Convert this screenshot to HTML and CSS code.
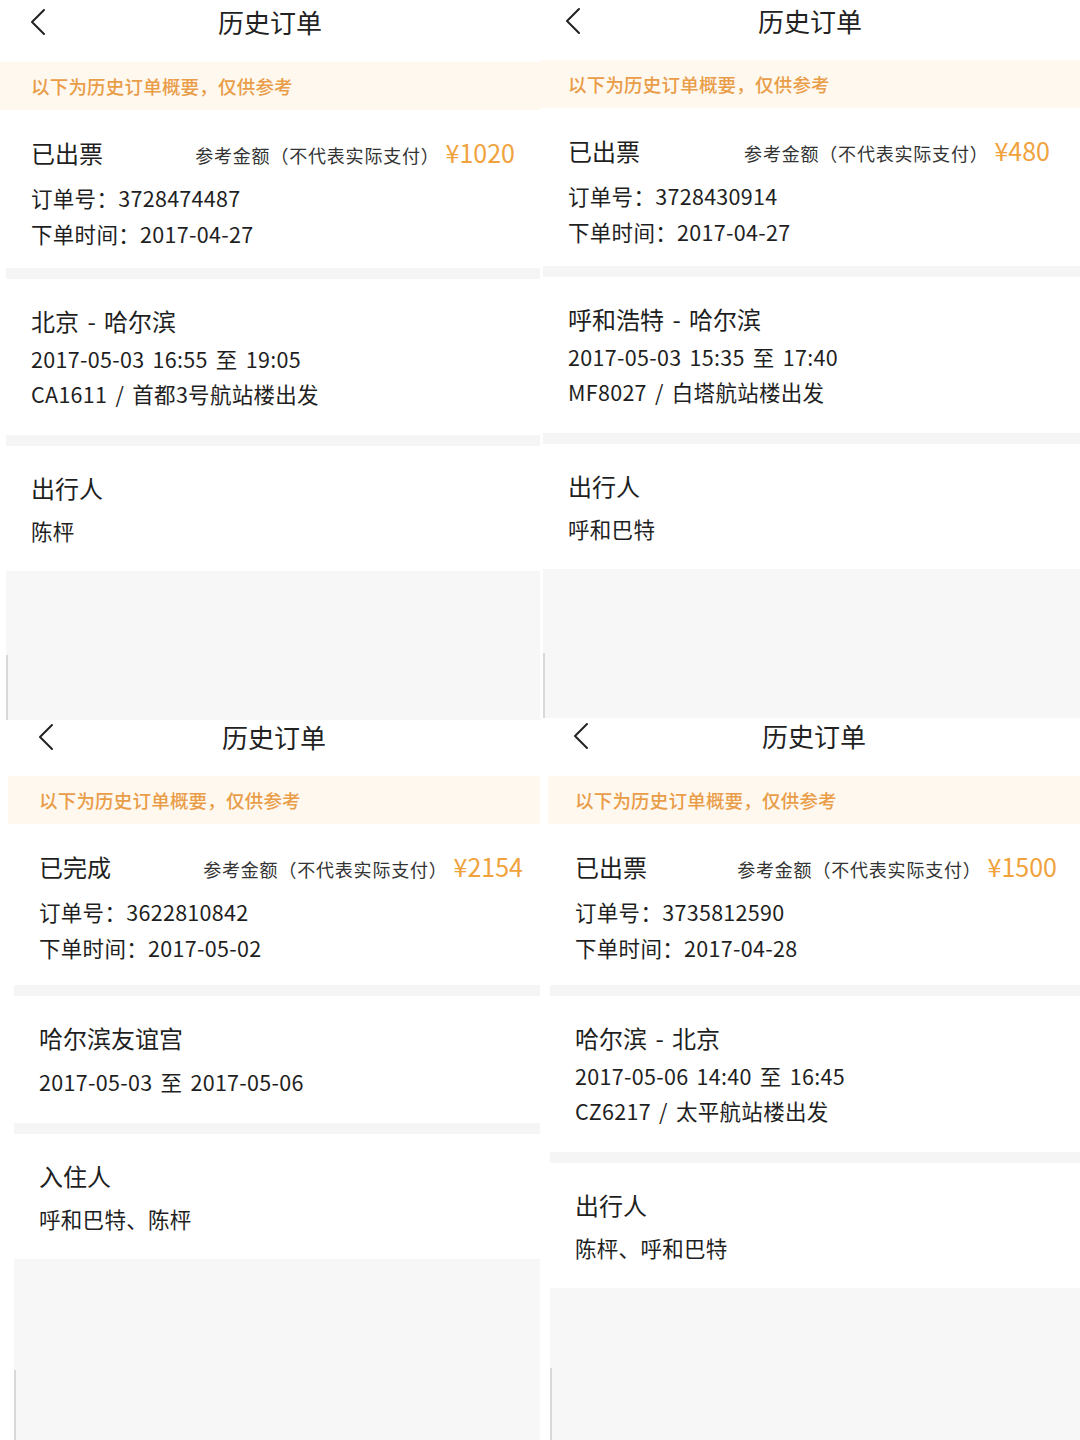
FILE: index.html
```html
<!DOCTYPE html>
<html lang="zh-CN">
<head>
    <meta charset="UTF-8">
    <meta name="viewport" content="width=device-width, initial-scale=1.0">
    <title>历史订单</title>
    <link rel="stylesheet" href="styles.css">
</head>
<body>
<main class="sheet">

    <section class="panel panel-tl">
        <header class="topbar">
            <span class="back"><svg width="18" height="28" viewBox="0 0 18 28"><path d="M15 2 L3 14 L15 26" fill="none" stroke="#222" stroke-width="2" stroke-linecap="round" stroke-linejoin="round"/></svg></span>
            <h1>历史订单</h1>
            <span></span>
        </header>
        <div class="notice">以下为历史订单概要，仅供参考</div>
        <div class="block order">
            <div class="order-head">
                <span class="status">已出票</span>
                <span class="ref">参考金额（不代表实际支付）</span>
                <span class="price">¥1020</span>
            </div>
            <p>订单号：3728474487</p>
            <p>下单时间：2017-04-27</p>
        </div>
        <div class="gap"></div>
        <div class="block trip">
            <div class="block-title">北京 - 哈尔滨</div>
            <p>2017-05-03 16:55 至 19:05</p>
            <p>CA1611 / 首都3号航站楼出发</p>
        </div>
        <div class="gap"></div>
        <div class="block people">
            <div class="block-title">出行人</div>
            <p>陈枰</p>
        </div>
        <div class="filler"><span class="edge"></span></div>
    </section>

    <section class="panel panel-tr">
        <header class="topbar">
            <span class="back"><svg width="18" height="28" viewBox="0 0 18 28"><path d="M15 2 L3 14 L15 26" fill="none" stroke="#222" stroke-width="2" stroke-linecap="round" stroke-linejoin="round"/></svg></span>
            <h1>历史订单</h1>
            <span></span>
        </header>
        <div class="notice">以下为历史订单概要，仅供参考</div>
        <div class="block order">
            <div class="order-head">
                <span class="status">已出票</span>
                <span class="ref">参考金额（不代表实际支付）</span>
                <span class="price">¥480</span>
            </div>
            <p>订单号：3728430914</p>
            <p>下单时间：2017-04-27</p>
        </div>
        <div class="gap"></div>
        <div class="block trip">
            <div class="block-title">呼和浩特 - 哈尔滨</div>
            <p>2017-05-03 15:35 至 17:40</p>
            <p>MF8027 / 白塔航站楼出发</p>
        </div>
        <div class="gap"></div>
        <div class="block people">
            <div class="block-title">出行人</div>
            <p>呼和巴特</p>
        </div>
        <div class="filler"><span class="edge"></span></div>
    </section>

    <section class="panel panel-bl">
        <header class="topbar">
            <span class="back"><svg width="18" height="28" viewBox="0 0 18 28"><path d="M15 2 L3 14 L15 26" fill="none" stroke="#222" stroke-width="2" stroke-linecap="round" stroke-linejoin="round"/></svg></span>
            <h1>历史订单</h1>
            <span></span>
        </header>
        <div class="notice">以下为历史订单概要，仅供参考</div>
        <div class="block order">
            <div class="order-head">
                <span class="status">已完成</span>
                <span class="ref">参考金额（不代表实际支付）</span>
                <span class="price">¥2154</span>
            </div>
            <p>订单号：3622810842</p>
            <p>下单时间：2017-05-02</p>
        </div>
        <div class="gap"></div>
        <div class="block hotel">
            <div class="block-title">哈尔滨友谊宫</div>
            <p>2017-05-03 至 2017-05-06</p>
        </div>
        <div class="gap"></div>
        <div class="block people">
            <div class="block-title">入住人</div>
            <p>呼和巴特、陈枰</p>
        </div>
        <div class="filler"><span class="edge"></span></div>
    </section>

    <section class="panel panel-br">
        <header class="topbar">
            <span class="back"><svg width="18" height="28" viewBox="0 0 18 28"><path d="M15 2 L3 14 L15 26" fill="none" stroke="#222" stroke-width="2" stroke-linecap="round" stroke-linejoin="round"/></svg></span>
            <h1>历史订单</h1>
            <span></span>
        </header>
        <div class="notice">以下为历史订单概要，仅供参考</div>
        <div class="block order">
            <div class="order-head">
                <span class="status">已出票</span>
                <span class="ref">参考金额（不代表实际支付）</span>
                <span class="price">¥1500</span>
            </div>
            <p>订单号：3735812590</p>
            <p>下单时间：2017-04-28</p>
        </div>
        <div class="gap"></div>
        <div class="block trip">
            <div class="block-title">哈尔滨 - 北京</div>
            <p>2017-05-06 14:40 至 16:45</p>
            <p>CZ6217 / 太平航站楼出发</p>
        </div>
        <div class="gap"></div>
        <div class="block people">
            <div class="block-title">出行人</div>
            <p>陈枰、呼和巴特</p>
        </div>
        <div class="filler"><span class="edge"></span></div>
    </section>

</main>
</body>
</html>
```

FILE: styles.css
```css
html, body {
    margin: 0;
    padding: 0;
    background-color: #fff;
}
body {
    font-family: "Noto Sans CJK SC", "Noto Sans", sans-serif;
    color: #1f1f1f;
    width: 1080px;
    height: 1440px;
    overflow: hidden;
    text-spacing-trim: space-all;
}
.sheet {
    display: grid;
    grid-template-columns: 540px 540px;
    grid-template-rows: 720px 720px;
}

/* one phone screenshot */
.panel {
    --bar: 44px;
    --notice-top: 18px;
    --pad-l: 31px;
    --pad-r: 25px;
    --back-l: 29px;
    --inset: 6px;
    --edge: 65px;
    display: flex;
    flex-direction: column;
    background-color: #fff;
    min-width: 0;
}
.panel-tr {
    --bar: 42px;
    --pad-l: 28px;
    --pad-r: 30px;
    --back-l: 24px;
    --inset: 3px;
    height: 718px;
}
.panel-bl {
    --bar: 34px;
    --notice-top: 22px;
    --back-l: 29px;
    --pad-r: 17px;
    --edge: 70px;
    margin-left: 8px;
}
.panel-br {
    --bar: 36px;
    --notice-top: 22px;
    --pad-l: 27px;
    --pad-r: 23px;
    --back-l: 24px;
    --inset: 2px;
    --edge: 72px;
    margin-left: 8px;
    margin-top: -2px;
    height: 722px;
}

.topbar {
    height: var(--bar);
    display: grid;
    grid-template-columns: 1fr auto 1fr;
    align-items: center;
    flex-shrink: 0;
}
.back {
    padding-left: var(--back-l);
    display: flex;
    align-items: center;
}
.topbar h1 {
    margin: 0;
    font-size: 26px;
    font-weight: 400;
    line-height: 30px;
    color: #222;
}

.notice {
    margin-top: var(--notice-top);
    height: 48px;
    padding-left: var(--pad-l);
    display: flex;
    align-items: center;
    background-color: #fff8ef;
    color: #e99d48;
    font-size: 18.5px;
    font-weight: 500;
    letter-spacing: 0.2px;
    flex-shrink: 0;
}

.block {
    padding: 27px var(--pad-r) 0 var(--pad-l);
    flex-shrink: 0;
}
.block p {
    margin: 0;
    font-size: 21.5px;
    line-height: 36px;
    letter-spacing: 0.3px;
    word-spacing: 3px;
}
.block-title,
.status {
    font-size: 24px;
    line-height: 30px;
}
.block-title {
    word-spacing: 3px;
}
.order-head {
    display: flex;
    align-items: baseline;
    line-height: 30px;
}
.ref {
    margin-left: auto;
    font-size: 18px;
    letter-spacing: 0.8px;
    color: #333;
}
.price {
    margin-left: 6px;
    font-size: 25px;
    color: #f0a23c;
}
.order {
    height: 158px;
    box-sizing: border-box;
}
.order p:first-of-type {
    margin-top: 10px;
}
.trip {
    height: 156px;
    box-sizing: border-box;
}
.trip p {
    line-height: 35px;
}
.trip p:first-of-type {
    margin-top: 5px;
}
.hotel {
    height: 127px;
    box-sizing: border-box;
}
.hotel p {
    margin-top: 11px;
}
.people {
    height: 125px;
    box-sizing: border-box;
}
.people p {
    margin-top: 10px;
}
.panel-bl .order,
.panel-br .order {
    height: 161px;
}

.gap {
    height: 11px;
    margin-left: var(--inset);
    background-color: #f5f5f5;
    flex-shrink: 0;
}
.filler {
    flex: 1;
    margin-left: var(--inset);
    background-color: #f7f7f7;
    display: flex;
    flex-direction: column;
    justify-content: flex-end;
}
.edge {
    height: var(--edge);
    border-left: 2px solid #d9d9d9;
}
```
